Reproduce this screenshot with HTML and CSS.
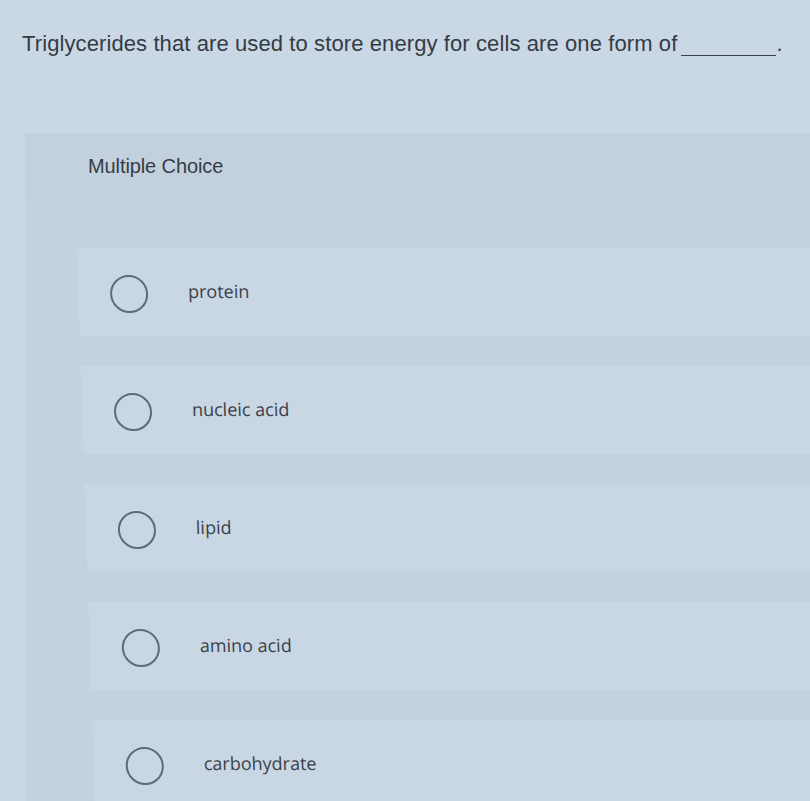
FILE: index.html
```html
<!DOCTYPE html>
<html lang="en">
<head>
<meta charset="utf-8">
<title>Multiple Choice</title>
<link rel="stylesheet" href="styles.css">
</head>
<body>
  <main class="page">
    <p class="question">Triglycerides that are used to store energy for cells are one form of<span class="blank"></span>.</p>

    <section class="panel">
      <header class="panel-head">Multiple Choice</header>
      <ul class="options">
        <li class="option"><span class="radio"></span><span class="label">protein</span></li>
        <li class="option"><span class="radio"></span><span class="label">nucleic acid</span></li>
        <li class="option"><span class="radio"></span><span class="label">lipid</span></li>
        <li class="option"><span class="radio"></span><span class="label">amino acid</span></li>
        <li class="option"><span class="radio"></span><span class="label">carbohydrate</span></li>
      </ul>
    </section>
  </main>
</body>
</html>
```

FILE: styles.css
```css
html, body {
  margin: 0;
  padding: 0;
}

body {
  background: #cad8e5;
  color: #3a4049;
  font-family: "Liberation Sans", Arial, sans-serif;
  overflow: hidden;
}

.page {
  width: 810px;
  height: 801px;
  display: flex;
  flex-direction: column;
}

.question {
  margin: 0;
  padding: 31px 0 0 22px;
  font-size: 22px;
  line-height: 26px;
  letter-spacing: 0.1px;
  white-space: nowrap;
  color: #353b44;
}

.blank {
  display: inline-block;
  width: 95px;
  height: 20px;
  margin-left: 4px;
  border-bottom: 1px solid #3b4250;
  vertical-align: -5px;
}

.panel {
  margin: 76px 0 0 25px;
  flex: 1;
  background: #c4d2df;
  display: flex;
  flex-direction: column;
}

.panel-head {
  height: 67px;
  display: flex;
  align-items: center;
  padding-left: 63px;
  font-size: 20px;
  letter-spacing: -0.1px;
  color: #363c45;
  background: #c3d1de;
}

.options {
  list-style: none;
  margin: 0;
  padding: 48px 0 0 50px;
  display: flex;
  flex-direction: column;
  gap: 30px;
  transform: skewX(1.9deg);
  transform-origin: 0 0;
}

.option {
  height: 88px;
  display: flex;
  align-items: center;
  padding-left: 32px;
  background: #c9d6e3;
  font-family: "Open Sans", "Noto Sans", sans-serif;
  font-size: 18px;
  color: #3b414a;
}

.radio {
  width: 34px;
  height: 34px;
  margin-top: 4px;
  border: 2px solid #5c6b7e;
  border-radius: 50%;
  flex: none;
}

.label {
  margin-left: 40px;
  margin-top: -2px;
}
```
